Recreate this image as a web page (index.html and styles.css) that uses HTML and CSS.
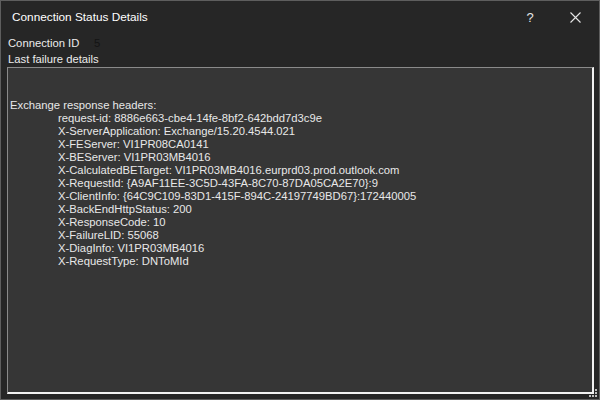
FILE: index.html
```html
<!DOCTYPE html>
<html>
<head>
<meta charset="utf-8">
<link rel="stylesheet" href="styles.css">
</head>
<body>
<div class="window">
  <div class="titlebar">
    <div class="title">Connection Status Details</div>
    <div class="controls">
      <span class="help">?</span>
      <svg class="close" width="11" height="11" viewBox="0 0 11 11"><path d="M0.5 0.5L10.5 10.5M10.5 0.5L0.5 10.5" stroke="#e6e6e6" stroke-width="1.1" fill="none"/></svg>
    </div>
  </div>
  <div class="content">
    <div class="row"><span class="label">Connection ID</span><span class="value">5</span></div>
    <div class="row2">Last failure details</div>
    <div class="textbox">
      <div class="line">&nbsp;</div>
      <div class="line">&nbsp;</div>
      <div class="line">Exchange response headers:</div>
      <div class="line ind">request-id: 8886e663-cbe4-14fe-8bf2-642bdd7d3c9e</div>
      <div class="line ind">X-ServerApplication: Exchange/15.20.4544.021</div>
      <div class="line ind">X-FEServer: VI1PR08CA0141</div>
      <div class="line ind">X-BEServer: VI1PR03MB4016</div>
      <div class="line ind">X-CalculatedBETarget: VI1PR03MB4016.eurprd03.prod.outlook.com</div>
      <div class="line ind">X-RequestId: {A9AF11EE-3C5D-43FA-8C70-87DA05CA2E70}:9</div>
      <div class="line ind">X-ClientInfo: {64C9C109-83D1-415F-894C-24197749BD67}:172440005</div>
      <div class="line ind">X-BackEndHttpStatus: 200</div>
      <div class="line ind">X-ResponseCode: 10</div>
      <div class="line ind">X-FailureLID: 55068</div>
      <div class="line ind">X-DiagInfo: VI1PR03MB4016</div>
      <div class="line ind">X-RequestType: DNToMId</div>
    </div>
  </div>
  <div class="grip">
    <svg width="10" height="10" viewBox="0 0 10 10">
      <rect x="7" y="1" width="2" height="2" fill="#bdbdbd"/>
      <rect x="7" y="4" width="2" height="2" fill="#bdbdbd"/>
      <rect x="7" y="7" width="2" height="2" fill="#bdbdbd"/>
      <rect x="4" y="7" width="2" height="2" fill="#bdbdbd"/>
      <rect x="1" y="7" width="2" height="2" fill="#bdbdbd"/>
    </svg>
  </div>
</div>
</body>
</html>
```

FILE: styles.css
```css
html, body {
  margin: 0;
  padding: 0;
  background: #262626;
}
.window {
  position: relative;
  width: 600px;
  height: 400px;
  box-sizing: border-box;
  border: 1px solid #5e5e5e;
  background: #262626;
  color: #ececec;
  font-family: "Liberation Sans", Arial, sans-serif;
  font-size: 11.25px;
  display: flex;
  flex-direction: column;
}
.titlebar {
  height: 32px;
  display: flex;
  align-items: center;
  justify-content: space-between;
  padding-left: 11px;
  flex: none;
}
.title {
  color: #ffffff;
  font-size: 11.8px;
}
.controls {
  display: flex;
  align-items: center;
  height: 100%;
}
.help {
  width: 46px;
  text-align: center;
  font-size: 13px;
  color: #e6e6e6;
}
.close {
  margin: 0 18px 0 17px;
}
.content {
  flex: 1;
  display: flex;
  flex-direction: column;
  padding: 2px 5px 5px 6px;
  min-height: 0;
}
.row {
  height: 16px;
  display: flex;
  align-items: center;
  padding-left: 1px;
}
.label {
  width: 86px;
}
.value {
  color: #141414;
}
.row2 {
  height: 16px;
  display: flex;
  align-items: center;
  padding-left: 1px;
}
.textbox {
  flex: 1;
  box-sizing: border-box;
  background: #363636;
  border-top: 1px solid #8a8a8a;
  border-left: 1px solid #8a8a8a;
  border-right: 2px solid #f2f2f2;
  border-bottom: 2px solid #f2f2f2;
  padding: 5px 2px 0 2px;
  margin-top: 0;
}
.line {
  height: 13px;
  line-height: 13px;
  white-space: nowrap;
  color: #e8e8e8;
}
.ind {
  padding-left: 48px;
}
.grip {
  position: absolute;
  right: 1px;
  bottom: 1px;
  width: 10px;
  height: 10px;
}
.grip svg { display: block; }
```
